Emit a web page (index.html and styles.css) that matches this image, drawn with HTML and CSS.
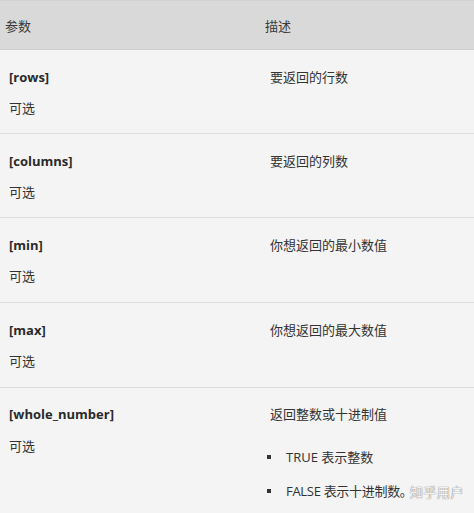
FILE: index.html
```
<!DOCTYPE html>
<html lang="zh">
<head>
<meta charset="utf-8">
<link rel="stylesheet" href="styles.css">
</head>
<body>
<div class="table">
  <div class="row head">
    <div class="cell c1">参数</div>
    <div class="cell c2">描述</div>
  </div>
  <div class="row">
    <div class="cell c1"><p class="name">[rows]</p><p>可选</p></div>
    <div class="cell c2"><p>要返回的行数</p></div>
  </div>
  <div class="row">
    <div class="cell c1"><p class="name">[columns]</p><p>可选</p></div>
    <div class="cell c2"><p>要返回的列数</p></div>
  </div>
  <div class="row tall">
    <div class="cell c1"><p class="name">[min]</p><p>可选</p></div>
    <div class="cell c2"><p>你想返回的最小数值</p></div>
  </div>
  <div class="row tall">
    <div class="cell c1"><p class="name">[max]</p><p>可选</p></div>
    <div class="cell c2"><p>你想返回的最大数值</p></div>
  </div>
  <div class="row last">
    <div class="cell c1"><p class="name">[whole_number]</p><p class="opt">可选</p></div>
    <div class="cell c2">
      <p>返回整数或十进制值</p>
      <ul class="list">
        <li>TRUE 表示整数</li>
        <li class="narrow">FALSE 表示十进制数。</li>
      </ul>
    </div>
  </div>
</div>
<div class="watermark">知乎用户</div>
</body>
</html>
```
FILE: styles.css
```
html, body {
  margin: 0;
  padding: 0;
}
body {
  width: 474px;
  height: 513px;
  overflow: hidden;
  background: #f4f4f4;
  font-family: "Open Sans", "Noto Sans CJK SC", sans-serif;
  font-size: 13px;
  color: #333;
  position: relative;
}
.table {
  display: flex;
  flex-direction: column;
}
.row {
  display: grid;
  grid-template-columns: 261px 1fr;
  background: #f4f4f4;
  border-bottom: 1px solid #dedede;
}
.row.head {
  background: #d9d9d9;
  height: 48px;
  border-top: 1px solid #d2d2d2;
  border-bottom: 1px solid #cfcfcf;
  align-items: center;
  color: #3a3a3a;
}
.head .c1 { padding-left: 5px; }
.head .c2 { padding-left: 4px; }
.cell {
  padding: 17px 0 15px 9px;
}
.tall .cell { padding-bottom: 16px; }
.last .cell { padding-top: 16px; }
.head .cell { padding-top: 0; padding-bottom: 0; }
p {
  margin: 0;
  line-height: 20px;
}
p + p { margin-top: 11px; }
.name {
  font-weight: 700;
  color: #2a2a2a;
}
.opt { margin-top: 12px; }
.list {
  list-style: none;
  margin: 23px 0 0 0;
  padding: 0;
}
.list li {
  line-height: 20px;
  display: flex;
  align-items: center;
}
.list li + li { margin-top: 14px; }
.list li.narrow { letter-spacing: -0.3px; }
.list li::before {
  content: "";
  width: 4px;
  height: 4px;
  background: #333;
  margin-left: -3px;
  margin-right: 15px;
}
.watermark {
  position: absolute;
  left: 410px;
  top: 482px;
  font-size: 13px;
  line-height: 20px;
  font-family: "Noto Sans CJK SC", sans-serif;
  color: #f2f2f2;
  text-shadow: 0 0 1px #777, 0 0 1px #999;
  letter-spacing: 0.5px;
}
```
